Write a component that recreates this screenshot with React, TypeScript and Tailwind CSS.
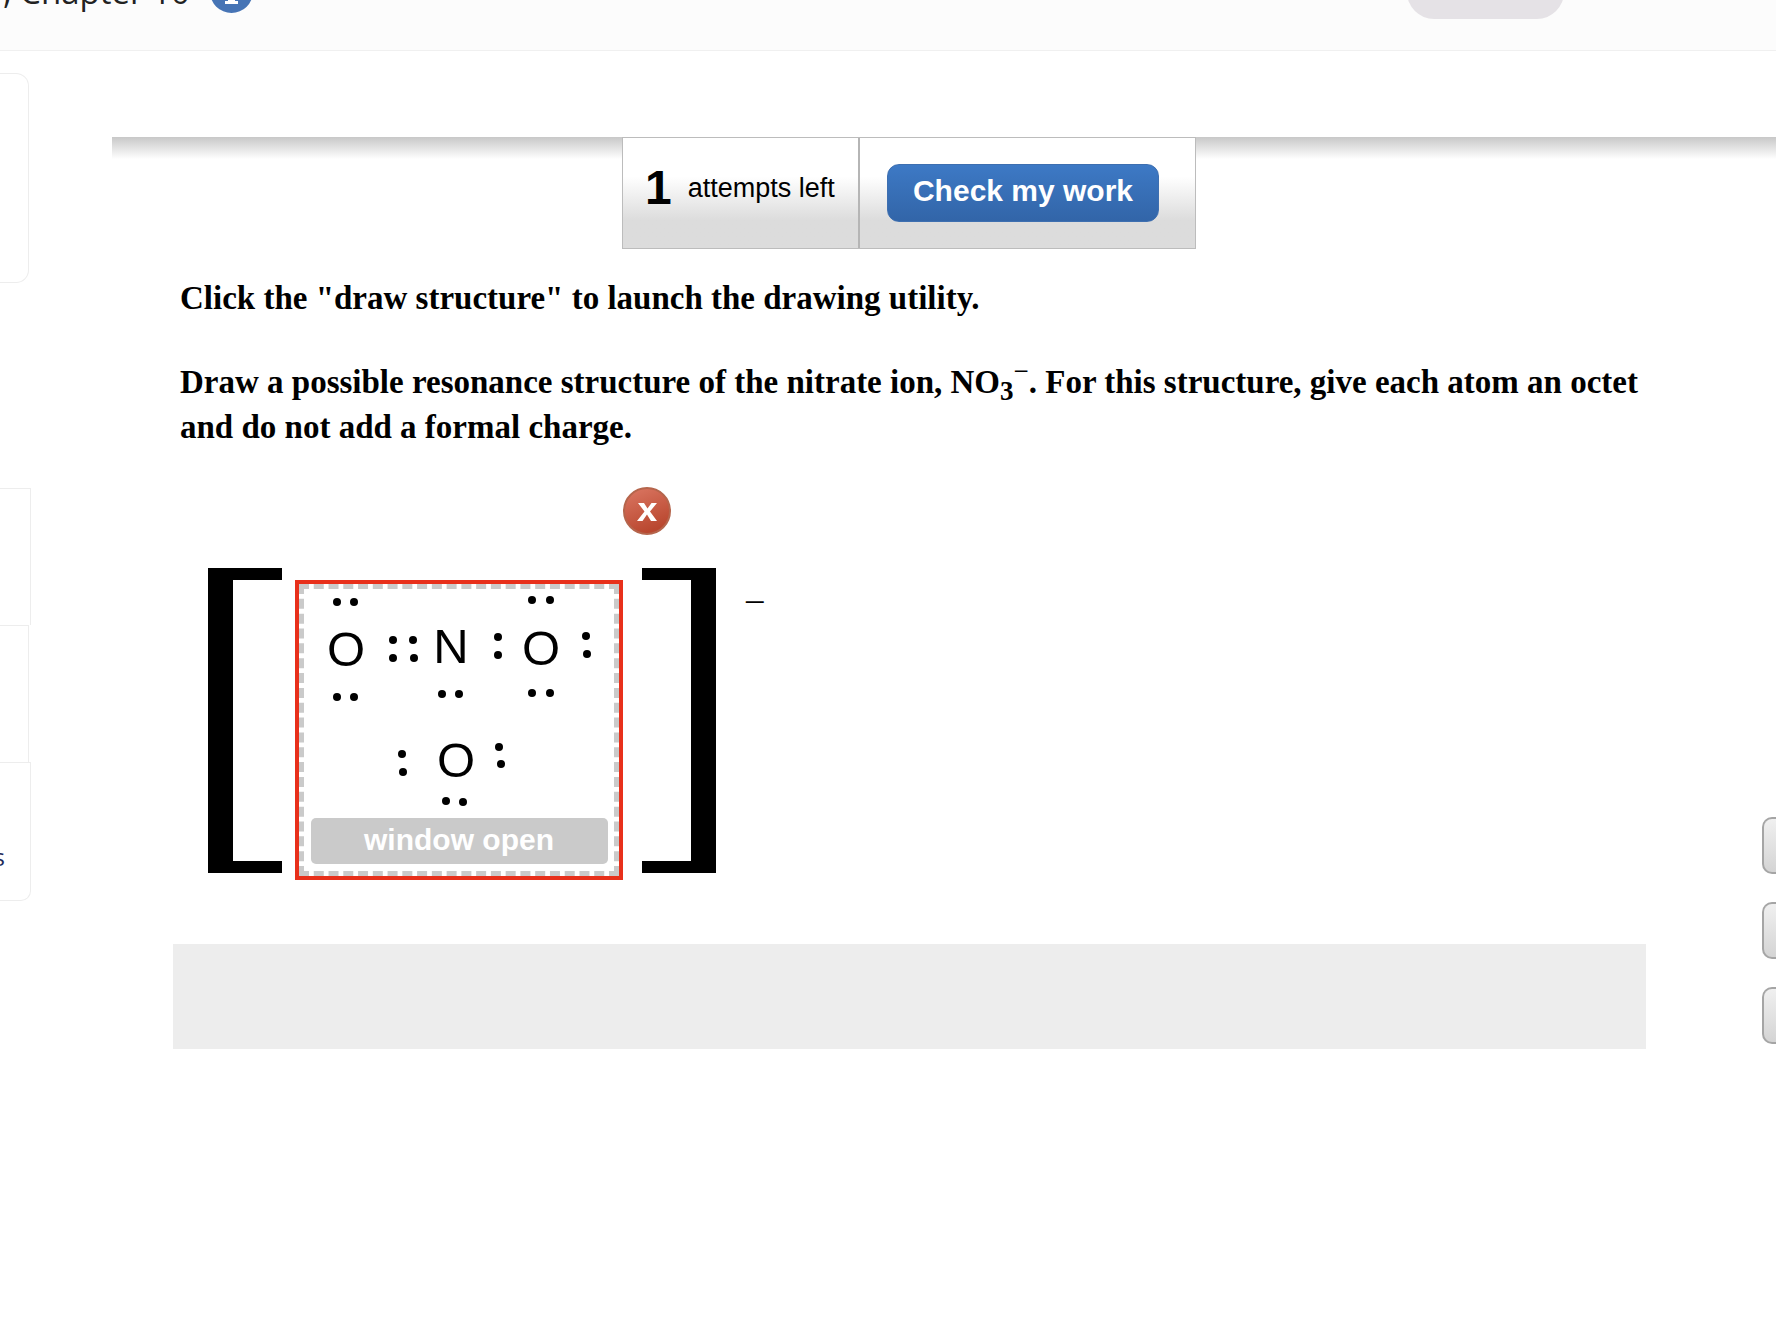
const DOTS: [number, number][] = [
  [33, 13], [50, 13], [33, 108], [50, 108],
  [89, 51], [109, 51], [89, 69], [110, 69],
  [138, 105], [155, 105],
  [194, 48], [194, 66],
  [228, 11], [246, 11], [228, 104], [246, 104],
  [282, 47], [283, 65],
  [98, 165], [99, 183], [195, 158], [197, 175],
  [142, 212], [159, 213],
]

const ATOMS = [
  { symbol: 'O', x: 42, y: 77 },
  { symbol: 'N', x: 147, y: 74 },
  { symbol: 'O', x: 237, y: 76 },
  { symbol: 'O', x: 152, y: 188 },
]

function Header() {
  return (
    <header className="h-[51px] overflow-hidden border-b border-[#f0f0f0] bg-[#fcfcfc]">
      <div className="-mt-[67px] flex h-[117px] items-center pr-[212px]">
        <h1 className="pl-[3px] font-['Open_Sans',sans-serif] text-[33px] text-[#222]">, Chapter 10</h1>
        <button
          type="button"
          aria-label="Info"
          className="ml-5 flex size-[43px] items-center justify-center rounded-full bg-[#4674b5] text-white"
        >
          <svg viewBox="0 0 43 43" className="size-[43px]" fill="currentColor">
            <circle cx="21" cy="9" r="4" />
            <path d="M16 16h9v15h3v3H15v-3h3V19h-2z" />
          </svg>
        </button>
        <button type="button" aria-label="Save" className="ml-auto h-[54px] w-[157px] rounded-full bg-[#e5e2e6]" />
      </div>
    </header>
  )
}

function Sidebar() {
  return (
    <aside className="w-[31px] shrink-0 pt-[22px]">
      <div className="h-[210px] w-[29px] rounded-r-[13px] border border-l-0 border-[#ededed]" />
      <nav className="mt-[205px]">
        <div className="h-[137px] border border-b-0 border-l-0 border-[#ededed]" />
        <div className="h-[137px] w-[29px] border border-b-0 border-l-0 border-[#ededed]" />
        <div className="flex h-[139px] justify-end rounded-br-[10px] border border-l-0 border-[#ededed] pt-[78px] pr-[25px]">
          <a href="#references" className="font-['Open_Sans',sans-serif] text-[24px] leading-8 text-[#1f2a5a]">
            References
          </a>
        </div>
      </nav>
    </aside>
  )
}

function Toolbar() {
  return (
    <div className="flex justify-center bg-linear-to-b from-[#c8c8c8] to-white bg-[length:100%_22px] bg-no-repeat pr-[70px]">
      <div className="flex h-[112px] divide-x-2 divide-[#b5b5b5] border border-[#bcbcbc] bg-linear-to-b from-white from-35% to-[#dcdcdc] to-75% font-['Liberation_Sans',sans-serif] text-black">
        <p className="flex w-[237px] items-center gap-4 pb-[10px] pl-[22px]">
          <strong className="text-[48px] leading-[56px]">1</strong>
          <span className="text-[27px]">attempts left</span>
        </p>
        <div className="w-[335px] pt-[26px] pl-[27px]">
          <button
            type="button"
            className="h-[58px] w-[272px] rounded-[12px] border border-[#3e6fb0] bg-linear-to-b from-[#3d79c5] to-[#3265a8] pb-[6px] text-[30px] font-bold text-white"
          >
            Check my work
          </button>
        </div>
      </div>
    </div>
  )
}

function Structure() {
  return (
    <div className="flex flex-col border-4 border-[#e8301b]">
      <div className="flex flex-col items-center border-[5px] border-dashed border-[#cacaca] pb-[7px]">
        <svg viewBox="0 0 310 229" className="h-[229px] w-[310px]" role="img" aria-label="Nitrate structure">
          {ATOMS.map(a => (
            <text key={`${a.symbol}${a.x}`} x={a.x} y={a.y} textAnchor="middle" className="font-['Liberation_Sans',sans-serif] text-[49px]">
              {a.symbol}
            </text>
          ))}
          {DOTS.map(([x, y]) => (
            <circle key={`${x}-${y}`} cx={x} cy={y} r="4" />
          ))}
        </svg>
        <button
          type="button"
          className="h-[46px] w-[297px] rounded-[5px] bg-[#cacaca] pb-[2px] font-['Liberation_Sans',sans-serif] text-[30px] leading-[44px] font-bold text-white"
        >
          window open
        </button>
      </div>
    </div>
  )
}

function WrongMark() {
  return (
    <svg viewBox="0 0 48 48" className="size-12" role="img" aria-label="Incorrect">
      <defs>
        <linearGradient id="wrong" x1="0" y1="0" x2="0.4" y2="1">
          <stop offset="0" stopColor="#dc7864" />
          <stop offset="1" stopColor="#b9472f" />
        </linearGradient>
      </defs>
      <circle cx="24" cy="24" r="23" fill="url(#wrong)" stroke="#b5654c" strokeWidth="2" />
      <path d="M15 16h6l3.500 5.500 4-5.500h5.500l-7 8.500 7 9.500h-6l-4-6.500-4.500 6.500h-5.500l7.500-9.500z" fill="#fff" />
    </svg>
  )
}

export default function App() {
  return (
    <div className="min-h-screen overflow-hidden bg-white">
      <Header />
      <div className="flex">
        <Sidebar />
        <main className="ml-[81px] min-w-0 flex-1 pt-[86px]">
          <Toolbar />
          <div className="flex">
            <article className="flex-1 pr-[116px] pl-[61px]">
              <div className="px-[7px] pt-[27px] font-['Liberation_Serif',serif] text-[33px] leading-[45px] font-bold text-black">
                <p>Click the "draw structure" to launch the drawing utility.</p>
                <p className="mt-[39px]">
                  Draw a possible resonance structure of the nitrate ion, NO<sub className="text-[27px]">3</sub>
                  <sup className="text-[27px] font-normal">−</sup>. For this structure, give each atom an octet and do not add a formal charge.
                </p>
              </div>

              <div className="mt-[37px] flex w-[498px] justify-end">
                <WrongMark />
              </div>

              <div className="mt-[33px] flex items-start pl-[35px] font-['Liberation_Serif',serif] text-black">
                <span className="h-[305px] w-[74px] border-y-[12px] border-l-[25px] border-black" />
                <div className="mt-3 ml-[13px]">
                  <Structure />
                </div>
                <span className="ml-[19px] h-[305px] w-[74px] border-y-[12px] border-r-[25px] border-black" />
                <span className="mt-3 ml-[30px] text-[35px] leading-[40px]">–</span>
              </div>

              <div className="mt-[64px] h-[105px] bg-[#ededed]" />
            </article>

            <aside className="flex w-[14px] shrink-0 flex-col gap-[28px] pt-[568px]">
              {['Hints', 'Print', 'Guide'].map(name => (
                <button
                  key={name}
                  type="button"
                  aria-label={name}
                  className="h-[57px] w-full rounded-l-[10px] border-2 border-r-0 border-[#a5a5a5] bg-linear-to-b from-[#f0f0f0] to-[#d4d4d4]"
                />
              ))}
            </aside>
          </div>
        </main>
      </div>
    </div>
  )
}
